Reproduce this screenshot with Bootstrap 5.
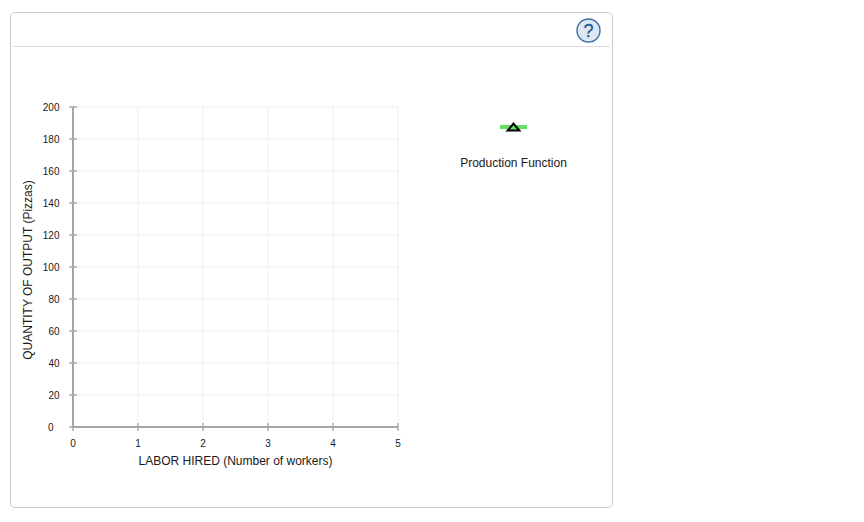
<!DOCTYPE html>
<html lang="en">
<head>
<meta charset="utf-8">
<title>Production Function</title>
<link href="https://cdn.jsdelivr.net/npm/bootstrap@5.3.0/dist/css/bootstrap.min.css" rel="stylesheet">
<style>
body { background: #fff; font-family: "Liberation Sans", Arial, sans-serif; color: #1a1a1a; }
.page-wrap { width: 603px; height: 496px; margin: 12px 0 0 10px; }
.panel-card { height: 100%; border: 1px solid #c9c9c9; border-radius: 5px; }
.panel-head { height: 34px; margin: 0 2px; padding: 5px 9px 0 0; background: #fff; border: 0; border-bottom: 1px solid #dcdcdc; border-radius: 0; }
.help-ic { display: block; width: 25px; height: 25px; }
.chart-svg { display: block; width: 601px; height: 460px; }
.chart-svg text { font-family: "Liberation Sans", Arial, sans-serif; fill: #1a1a1a; }
.tick-t { font-size: 10px; }
.axis-t { font-size: 12px; }
.grid-l { stroke: #f6f6f6; stroke-width: 2; }
.axis-l { stroke: #a6a6a6; stroke-width: 2; }
.tick-l { stroke: #999; stroke-width: 1.2; }
</style>
</head>
<body>
<div class="page-wrap">
  <div class="card panel-card">
    <div class="d-flex justify-content-end panel-head">
      <svg class="help-ic" viewBox="0 0 25 25" role="img" aria-label="Help">
        <circle cx="12.5" cy="12.5" r="11.5" fill="#dde8f2" stroke="#3a6ca1" stroke-width="1.4"/>
        <text x="12.5" y="19" text-anchor="middle" font-family="Liberation Sans, Arial, sans-serif" font-size="18" fill="#1f5a96" stroke="#1f5a96" stroke-width="0.3">?</text>
      </svg>
    </div>
    <!-- svg origin: page x=11, y=47 -->
    <svg class="chart-svg" viewBox="11 47 601 460" role="img">
      <g class="grid-l">
        <line x1="73" x2="398" y1="107" y2="107"/><line x1="73" x2="398" y1="139" y2="139"/>
        <line x1="73" x2="398" y1="171" y2="171"/><line x1="73" x2="398" y1="203" y2="203"/>
        <line x1="73" x2="398" y1="235" y2="235"/><line x1="73" x2="398" y1="267" y2="267"/>
        <line x1="73" x2="398" y1="299" y2="299"/><line x1="73" x2="398" y1="331" y2="331"/>
        <line x1="73" x2="398" y1="363" y2="363"/><line x1="73" x2="398" y1="395" y2="395"/>
        <line x1="138" x2="138" y1="107" y2="427"/><line x1="203" x2="203" y1="107" y2="427"/>
        <line x1="268" x2="268" y1="107" y2="427"/><line x1="333" x2="333" y1="107" y2="427"/>
        <line x1="398" x2="398" y1="107" y2="427"/>
      </g>
      <g class="tick-l">
        <line x1="69" x2="77" y1="107" y2="107"/><line x1="69" x2="77" y1="139" y2="139"/>
        <line x1="69" x2="77" y1="171" y2="171"/><line x1="69" x2="77" y1="203" y2="203"/>
        <line x1="69" x2="77" y1="235" y2="235"/><line x1="69" x2="77" y1="267" y2="267"/>
        <line x1="69" x2="77" y1="299" y2="299"/><line x1="69" x2="77" y1="331" y2="331"/>
        <line x1="69" x2="77" y1="363" y2="363"/><line x1="69" x2="77" y1="395" y2="395"/>
        <line x1="69" x2="77" y1="427" y2="427"/>
        <line x1="73" x2="73" y1="423" y2="431"/><line x1="138" x2="138" y1="423" y2="431"/>
        <line x1="203" x2="203" y1="423" y2="431"/><line x1="268" x2="268" y1="423" y2="431"/>
        <line x1="333" x2="333" y1="423" y2="431"/><line x1="398" x2="398" y1="423" y2="431"/>
      </g>
      <line class="axis-l" x1="73" x2="73" y1="107" y2="428"/>
      <line class="axis-l" x1="72" x2="398" y1="427" y2="427"/>
      <g class="tick-t" text-anchor="end">
        <text x="59.5" y="110.5">200</text><text x="59.5" y="142.5">180</text>
        <text x="59.5" y="174.5">160</text><text x="59.5" y="206.5">140</text>
        <text x="59.5" y="238.5">120</text><text x="59.5" y="270.5">100</text>
        <text x="59.5" y="302.5">80</text><text x="59.5" y="334.5">60</text>
        <text x="59.5" y="366.5">40</text><text x="59.5" y="398.5">20</text>
        <text x="53.5" y="430.5">0</text>
      </g>
      <g class="tick-t" text-anchor="middle">
        <text x="73" y="447">0</text><text x="138" y="447">1</text>
        <text x="203" y="447">2</text><text x="268" y="447">3</text>
        <text x="333" y="447">4</text><text x="398" y="447">5</text>
      </g>
      <text class="axis-t" x="235.5" y="465" text-anchor="middle">LABOR HIRED (Number of workers)</text>
      <text class="axis-t" transform="translate(32 270) rotate(-90)" text-anchor="middle">QUANTITY OF OUTPUT (Pizzas)</text>
      <rect x="500" y="125" width="27" height="4" fill="#62e066"/>
      <path d="M513.5 123.6 L519.4 130.6 H507.6 Z" fill="#62e066" stroke="#000" stroke-width="2"/>
      <text class="axis-t" x="513.5" y="167" text-anchor="middle">Production Function</text>
    </svg>
  </div>
</div>
<script src="https://cdn.jsdelivr.net/npm/bootstrap@5.3.0/dist/js/bootstrap.bundle.min.js"></script>
</body>
</html>
